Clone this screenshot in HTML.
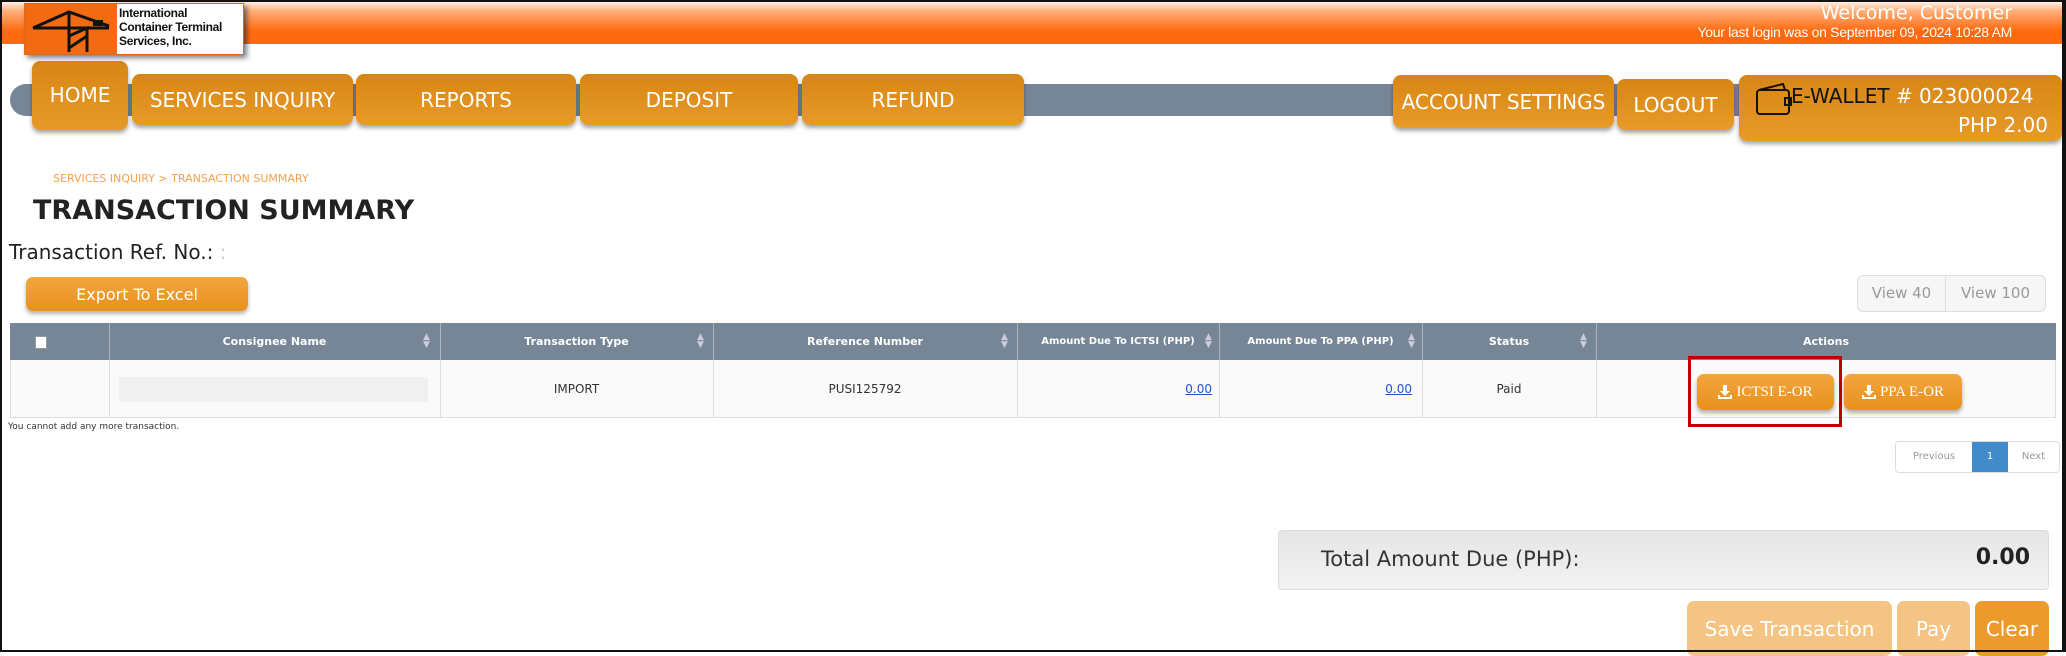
<!DOCTYPE html>
<html><head><meta charset="utf-8"><style>
*{box-sizing:border-box;margin:0;padding:0}
body{width:2066px;height:652px;background:#fff;position:relative;overflow:hidden;font-family:"DejaVu Sans","Liberation Sans",sans-serif}
.a{position:absolute}
.frame{left:0;top:0;width:2066px;height:652px;border:2px solid #111;border-right-width:4px;z-index:50;pointer-events:none}
.hdr{left:0;top:0;width:2066px;height:44px;background:linear-gradient(#fff 0%,#ffb07a 25%,#ff6a10 70%,#ff6a10 100%)}
.nb{position:absolute;color:#fff;font-size:20px;text-align:center;border-radius:8px;background:linear-gradient(#d68615,#e89a28);box-shadow:0 3px 4px rgba(0,0,0,.35);display:flex;align-items:center;justify-content:center}
.bar{left:10px;top:84px;width:2046px;height:32px;background:#768696;border-radius:16px}
.ob{position:absolute;color:#fff;border-radius:7px;background:linear-gradient(#f2a640,#e8901c);box-shadow:0 3px 4px rgba(0,0,0,.3);display:flex;align-items:center;justify-content:center}
.col{position:absolute;top:323px;height:37px;border-left:1px solid #aab4be}
.hd{position:absolute;top:323px;height:37px;line-height:37px;color:#fff;font-size:11px;font-weight:bold;text-align:center}
.cd{position:absolute;top:360px;height:58px;line-height:58px;font-size:12px;text-align:center;color:#333}
.arr{position:absolute;top:333px;color:#ccd;font-size:9px;line-height:8px}
.vl{position:absolute;top:360px;width:1px;height:58px;background:#ddd}
</style></head><body>
<div class="a hdr"></div>
<div class="a" style="left:24px;top:3px;width:220px;height:52px;background:#fff;border:1px solid #d96a20;box-shadow:3px 3px 5px rgba(0,0,0,.5)">
 <div class="a" style="left:0;top:0;width:92px;height:50px;background:#f26a12"></div>
 <svg class="a" style="left:4px;top:4px" width="86" height="44" viewBox="0 0 86 44"><path d="M4 20 L40 4 L80 18 M4 20 H80 M40 4 V44 M40 28 L58 20 V44 M58 28 L40 40" stroke="#111" stroke-width="3" fill="none"/><rect x="64" y="12" width="10" height="6" fill="#111"/></svg>
 <div class="a" style="left:94px;top:2px;font:bold 12px/14px 'Liberation Sans',sans-serif;color:#111;letter-spacing:-.3px">International<br>Container Terminal<br>Services, Inc.</div>
</div>
<div class="a" style="right:54px;top:2px;color:#fff;font:19px 'DejaVu Sans',sans-serif;text-align:right">Welcome, Customer</div>
<div class="a" style="right:54px;top:24px;color:#fff;font:14px 'Liberation Sans',sans-serif;letter-spacing:-.3px">Your last login was on September 09, 2024 10:28 AM</div>

<div class="a bar"></div>
<div class="nb" style="left:32px;top:61px;width:96px;height:69px;align-items:flex-start;padding-top:22px">HOME</div>
<div class="nb" style="left:132px;top:74px;width:221px;height:51px">SERVICES INQUIRY</div>
<div class="nb" style="left:356px;top:74px;width:220px;height:51px">REPORTS</div>
<div class="nb" style="left:580px;top:74px;width:218px;height:51px">DEPOSIT</div>
<div class="nb" style="left:802px;top:74px;width:222px;height:51px">REFUND</div>
<div class="nb" style="left:1393px;top:75px;width:221px;height:53px">ACCOUNT SETTINGS</div>
<div class="nb" style="left:1617px;top:79px;width:117px;height:51px">LOGOUT</div>
<div class="nb" style="left:1739px;top:75px;width:323px;height:66px;display:block">
 <svg class="a" style="left:16px;top:5px" width="40" height="36" viewBox="0 0 40 36"><rect x="2" y="10" width="32" height="24" rx="3" fill="none" stroke="#111" stroke-width="2"/><path d="M4 10 L28 4 L30 10" fill="none" stroke="#111" stroke-width="2"/><rect x="30" y="18" width="6" height="7" fill="none" stroke="#111" stroke-width="2"/></svg>
 <div class="a" style="left:52px;top:9px;font-size:20px"><span style="color:#111">E-WALLET</span> # 023000024</div>
 <div class="a" style="right:14px;top:38px;font-size:20px">PHP 2.00</div>
</div>

<div class="a" style="left:53px;top:172px;font-size:11px;color:#f7a04a">SERVICES INQUIRY &gt; TRANSACTION SUMMARY</div>
<div class="a" style="left:33px;top:195px;font-size:27px;font-weight:bold;color:#222">TRANSACTION SUMMARY</div>
<div class="a" style="left:9px;top:240px;font-size:20px;color:#222">Transaction Ref. No.: <span style="color:#ccc">:</span></div>
<div class="ob" style="left:26px;top:277px;width:222px;height:34px;font-size:16px">Export To Excel</div>
<div class="a" style="left:1857px;top:275px;width:189px;height:37px;border:1px solid #ddd;border-radius:6px;background:#f6f6f6;font-size:15px;color:#999">
 <div class="a" style="left:0;top:0;width:88px;height:35px;line-height:35px;text-align:center;border-right:1px solid #ddd">View 40</div>
 <div class="a" style="left:88px;top:0;width:99px;height:35px;line-height:35px;text-align:center">View 100</div>
</div>

<div class="a" style="left:10px;top:323px;width:2046px;height:37px;background:#768696"></div>
<div class="a" style="left:10px;top:360px;width:2046px;height:58px;background:#fafafa;border:1px solid #ddd;border-top:0"></div>
<div class="col" style="left:109px"></div><div class="col" style="left:440px"></div><div class="col" style="left:713px"></div><div class="col" style="left:1017px"></div><div class="col" style="left:1219px"></div><div class="col" style="left:1422px"></div><div class="col" style="left:1596px"></div>
<div class="vl" style="left:109px"></div><div class="vl" style="left:440px"></div><div class="vl" style="left:713px"></div><div class="vl" style="left:1017px"></div><div class="vl" style="left:1219px"></div><div class="vl" style="left:1422px"></div><div class="vl" style="left:1596px"></div>
<div class="a" style="left:35px;top:336px;width:12px;height:13px;background:#fff;border:1px solid #999"></div>
<div class="hd" style="left:109px;width:331px">Consignee Name</div>
<div class="hd" style="left:440px;width:273px">Transaction Type</div>
<div class="hd" style="left:713px;width:304px">Reference Number</div>
<div class="hd" style="left:1017px;width:202px;font-size:10px">Amount Due To ICTSI (PHP)</div>
<div class="hd" style="left:1219px;width:203px;font-size:10px">Amount Due To PPA (PHP)</div>
<div class="hd" style="left:1422px;width:174px">Status</div>
<div class="hd" style="left:1596px;width:460px">Actions</div>
<div class="arr" style="left:423px">▲<br>▼</div><div class="arr" style="left:697px">▲<br>▼</div><div class="arr" style="left:1001px">▲<br>▼</div><div class="arr" style="left:1205px">▲<br>▼</div><div class="arr" style="left:1408px">▲<br>▼</div><div class="arr" style="left:1580px">▲<br>▼</div>
<div class="a" style="left:119px;top:377px;width:309px;height:25px;background:#f0f0f0"></div>
<div class="cd" style="left:440px;width:273px">IMPORT</div>
<div class="cd" style="left:713px;width:304px">PUSI125792</div>
<div class="cd" style="left:1017px;width:202px;text-align:right;padding-right:7px"><span style="color:#2255cc;text-decoration:underline">0.00</span></div>
<div class="cd" style="left:1219px;width:203px;text-align:right;padding-right:10px"><span style="color:#2255cc;text-decoration:underline">0.00</span></div>
<div class="cd" style="left:1422px;width:174px">Paid</div>
<div class="a" style="left:1688px;top:356px;width:154px;height:71px;border:3px solid #c00000"></div>
<div class="ob" style="left:1697px;top:374px;width:137px;height:36px;font:15px 'Liberation Serif',serif"><svg width="14" height="14" viewBox="0 0 14 14" style="margin-right:4px"><path d="M5 0h4v6h3l-5 5-5-5h3z M0 10h2v2h10v-2h2v4H0z" fill="#fff"/></svg>ICTSI E-OR</div>
<div class="ob" style="left:1844px;top:374px;width:118px;height:36px;font:15px 'Liberation Serif',serif"><svg width="14" height="14" viewBox="0 0 14 14" style="margin-right:4px"><path d="M5 0h4v6h3l-5 5-5-5h3z M0 10h2v2h10v-2h2v4H0z" fill="#fff"/></svg>PPA E-OR</div>
<div class="a" style="left:8px;top:422px;font-size:9px;color:#333">You cannot add any more transaction.</div>

<div class="a" style="left:1895px;top:441px;width:165px;height:32px;border:1px solid #ddd;border-radius:4px;font-size:10px;color:#999">
 <div class="a" style="left:0;top:0;width:76px;height:30px;line-height:30px;text-align:center">Previous</div>
 <div class="a" style="left:76px;top:0;width:36px;height:30px;line-height:30px;text-align:center;background:#428bca;color:#fff">1</div>
 <div class="a" style="left:112px;top:0;width:51px;height:30px;line-height:30px;text-align:center">Next</div>
</div>

<div class="a" style="left:1278px;top:530px;width:771px;height:60px;background:linear-gradient(#e6e6e6,#f2f2f2);border:1px solid #ddd;border-radius:4px">
 <div class="a" style="left:42px;top:16px;font-size:21px;color:#333">Total Amount Due (PHP):</div>
 <div class="a" style="right:18px;top:14px;font-size:22px;font-weight:bold;color:#222">0.00</div>
</div>
<div class="ob" style="left:1687px;top:601px;width:205px;height:55px;font-size:20px;background:#f4c484;box-shadow:none">Save Transaction</div>
<div class="ob" style="left:1897px;top:601px;width:73px;height:55px;font-size:20px;background:#f4c484;box-shadow:none">Pay</div>
<div class="ob" style="left:1975px;top:601px;width:74px;height:55px;font-size:20px;background:#ec9a2c;box-shadow:none">Clear</div>
<div class="a frame"></div>
</body></html>
